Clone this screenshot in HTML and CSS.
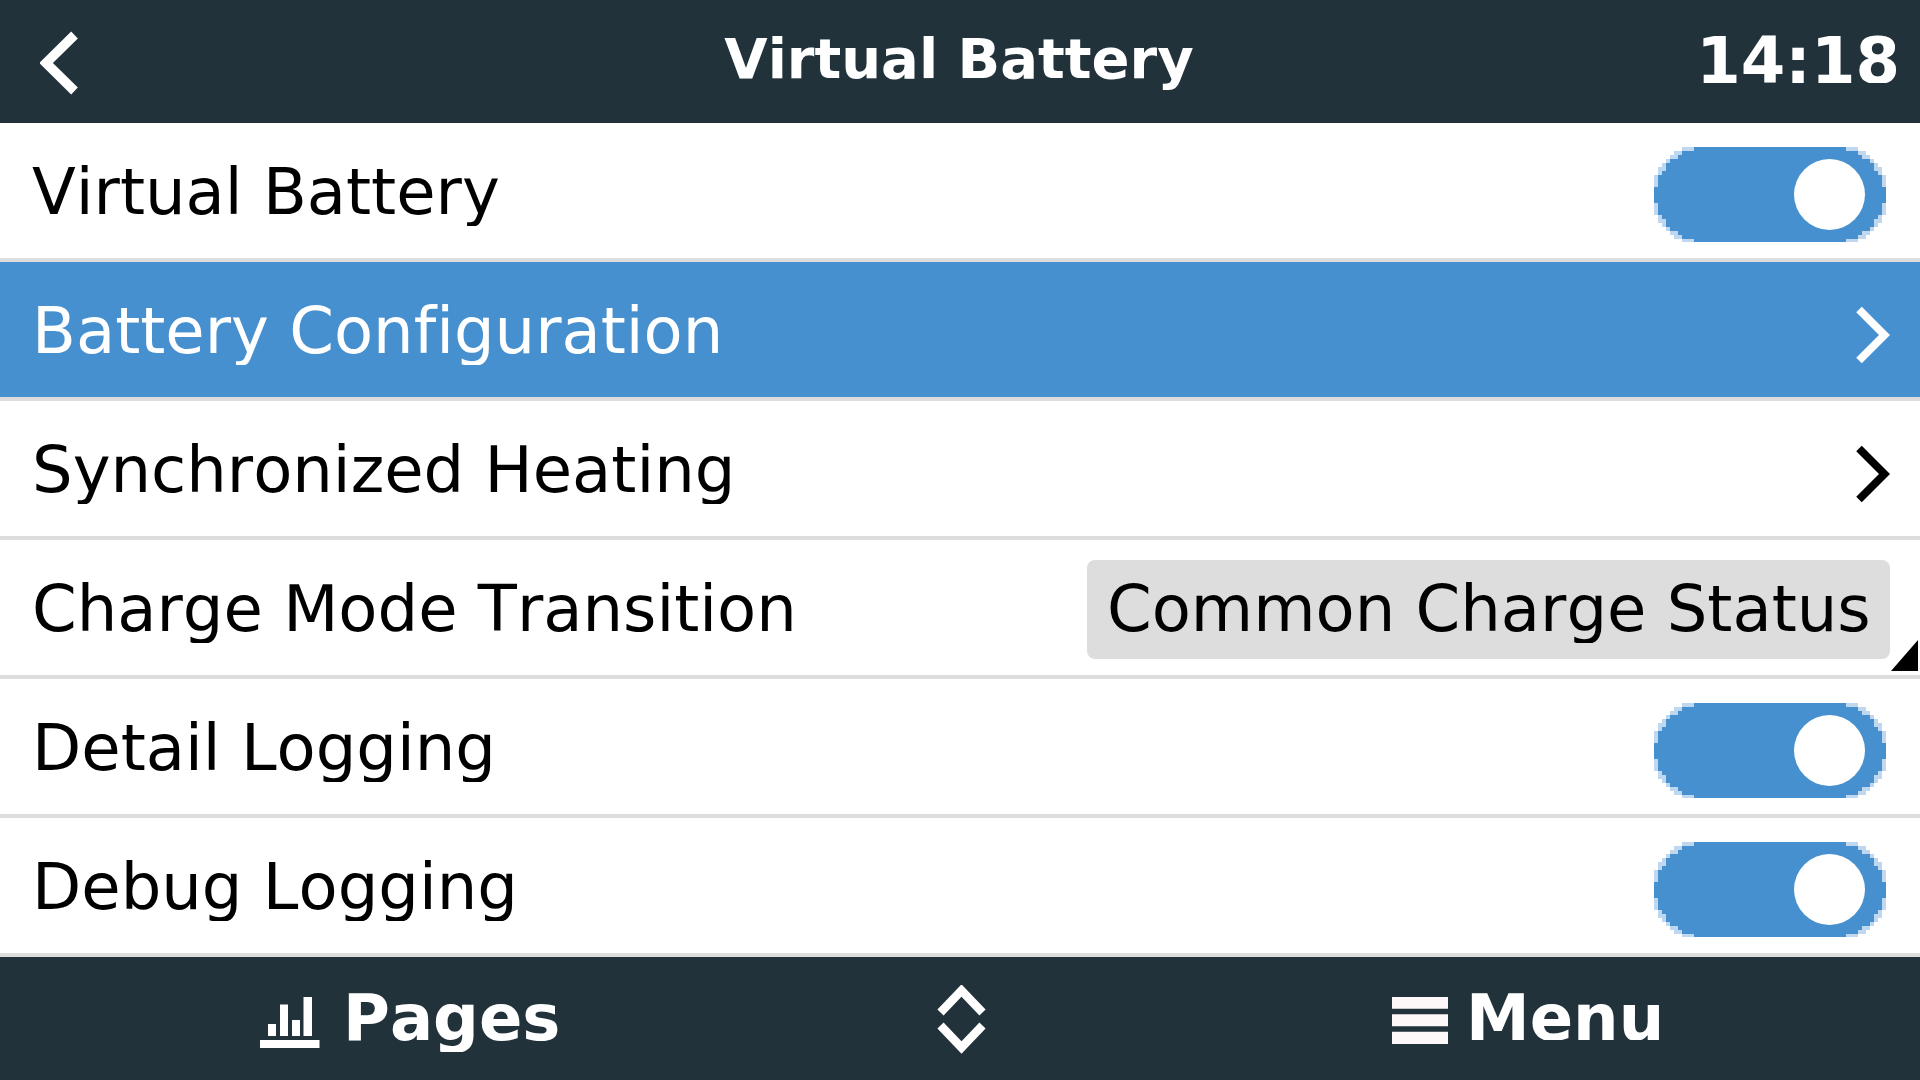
FILE: index.html
```html
<!DOCTYPE html>
<html lang="en">
<head>
<meta charset="utf-8">
<title>Virtual Battery</title>
<link rel="stylesheet" href="styles.css">
</head>
<body>
<header class="bar header">
  <svg class="back" viewBox="0 0 40 66"><path d="M34.500 5 6 33 34.500 61" /></svg>
  <h1 class="title">Virtual Battery</h1>
  <time class="clock">14:18</time>
</header>
<main class="list">
  <div class="row">
    <span class="label">Virtual Battery</span>
    <svg class="toggle" viewBox="0 0 232 95">
      <!-- pill on a 4px grid: translucent edge cells, then the solid body -->
      <g id="switch">
        <g transform="scale(4)" shape-rendering="crispEdges">
          <path opacity=".35" d="M7 0H51V24H7ZM5 1H53V23H5ZM4 2H54V22H4ZM3 3H55V21H3ZM2 4H56V20H2ZM1 5H57V19H1ZM0 7H58V17H0Z" />
          <path d="M10 0H48V24H10ZM7 1H51V23H7ZM6 2H52V22H6ZM4 3H54V21H4ZM3 4H55V20H3ZM2 6H56V18H2ZM1 7H57V17H1ZM0 10H58V14H0Z" />
        </g>
        <circle class="knob" cx="175.500" cy="47.500" r="35.500" />
      </g>
    </svg>
  </div>
  <div class="row selected">
    <span class="label">Battery Configuration</span>
    <svg class="chevron" viewBox="0 0 34 58"><path d="M3 3.500 28.500 29 3 54.500" /></svg>
  </div>
  <div class="row">
    <span class="label">Synchronized Heating</span>
    <svg class="chevron" viewBox="0 0 34 58"><path d="M3 3.500 28.500 29 3 54.500" /></svg>
  </div>
  <div class="row">
    <span class="label">Charge Mode Transition</span>
    <span class="value"><span class="label">Common Charge Status</span></span>
    <svg class="corner" viewBox="0 0 28 31"><path d="M1 31 28 0V31Z" /></svg>
  </div>
  <div class="row">
    <span class="label">Detail Logging</span>
    <svg class="toggle" viewBox="0 0 232 95"><use href="#switch" /></svg>
  </div>
  <div class="row">
    <span class="label">Debug Logging</span>
    <svg class="toggle" viewBox="0 0 232 95"><use href="#switch" /></svg>
  </div>
</main>
<footer class="bar footer">
  <div class="action pages">
    <svg class="pages-icon" viewBox="0 0 60 52"><path d="M0 43H59.500V51H0ZM8 27H16V39H8ZM20 7.500H28V39H20ZM32 23H40V39H32ZM43.500 0H52V39H43.500Z" /></svg>
    <span class="label">Pages</span>
  </div>
  <svg class="scroll" viewBox="0 0 50 70"><path d="M3.500 27.500 24.500 5.500 45.500 27.500M3.500 40.500 24.500 62.500 45.500 40.500" /></svg>
  <div class="action menu">
    <svg class="menu-icon" viewBox="0 0 56 48"><path d="M0 0H56V11.700H0ZM0 17.300H56V29.300H0ZM0 34.700H56V47H0Z" /></svg>
    <span class="label">Menu</span>
  </div>
</footer>
</body>
</html>
```
FILE: styles.css
```css
* { box-sizing: border-box; }
body {
  margin: 0;
  width: 1920px;
  height: 1080px;
  overflow: hidden;
  background: #fff;
  color: #000;
  font: 64px/76px "DejaVu Sans", sans-serif;
  font-kerning: none;
  font-variant-ligatures: none;
}
.bar {
  height: 123px;
  background: #22323b;
  color: #fff;
  font-weight: bold;
}
.header {
  display: grid;
  grid-template-columns: 674px 1fr 674px;
  padding: 0 20px 0 38px;
  column-gap: 8px;
}
.back { width: 40px; height: 66px; margin: 30px 0 0 2px; fill: none; stroke: #fff; stroke-width: 9.500; }
.title {
  margin: 21px 0 0 -20px;
  font-size: 56px;
  text-align: center;
  white-space: nowrap;
  clip-path: inset(0 0 6px);
}
.clock { margin-top: 23px; text-align: right; clip-path: inset(0 0 16px); height: 76px; }
.row {
  position: relative;
  display: flex;
  justify-content: space-between;
  align-items: flex-start;
  height: 139px;
  padding: 0 30px 0 32px;
  border-bottom: 4px solid #ddd;
}
.selected { background: #4790d0; color: #fff; }
.row > .label { margin-top: 31px; }
/* descenders are cut off 12px below the baseline */
.label { display: block; white-space: nowrap; clip-path: inset(0 0 4px); }
.title { height: 76px; }
.toggle { width: 232px; height: 95px; margin: 24px 4px 0 0; fill: #4790d0; }
.knob { fill: #fff; }
.chevron { width: 34px; height: 58px; margin-top: 44px; fill: none; stroke: currentColor; stroke-width: 7.800; }
.value {
  width: 803px;
  height: 99px;
  margin-top: 20px;
  padding: 11px 20px;
  border-radius: 8px;
  background: #ddd;
}
.corner { position: absolute; right: 2px; bottom: 4px; width: 28px; height: 31px; }
.footer { display: flex; align-items: flex-start; }
.action { display: flex; align-items: flex-start; padding-top: 23px; }
.pages { width: 937px; padding-left: 260px; gap: 23px; }
.pages-icon { width: 60px; height: 52px; margin-top: 17px; fill: #fff; }
.scroll { width: 50px; height: 70px; margin-top: 28px; fill: none; stroke: #fff; stroke-width: 8.500; }
.menu { padding-left: 405px; gap: 18px; }
.menu .label { clip-path: inset(0 0 16px); }
.menu-icon { width: 56px; height: 48px; margin-top: 17px; fill: #fff8f8; }
```
